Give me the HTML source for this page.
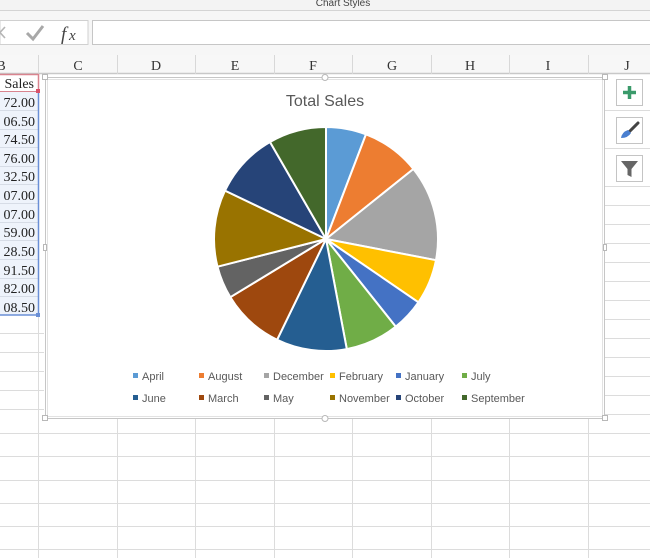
<!DOCTYPE html>
<html><head><meta charset="utf-8"><style>
html,body{margin:0;padding:0;width:650px;height:558px;overflow:hidden;background:#fff}
svg{display:block}
</style></head><body>
<svg width="650" height="558" viewBox="0 0 650 558" xmlns="http://www.w3.org/2000/svg">
<rect x="0" y="0" width="650" height="558" fill="#fff"/>
<rect x="0" y="0" width="650" height="10" fill="#f3f3f3"/>
<text x="343" y="6" font-family="Liberation Sans, sans-serif" font-size="10" fill="#444" text-anchor="middle">Chart Styles</text>
<line x1="0" y1="10.5" x2="650" y2="10.5" stroke="#d4d4d4"/>
<rect x="0" y="11" width="650" height="44" fill="#f6f6f6"/>
<rect x="0" y="20.5" width="88" height="24" fill="#fff" stroke="#d0d0d0"/>
<rect x="92.5" y="20.5" width="560" height="24" fill="#fff" stroke="#c6c6c6"/>
<path d="M5 27 L0 32.5 L5 38" fill="none" stroke="#b5b5b5" stroke-width="1.6"/>
<path d="M27 33 L33 39 L43 26" fill="none" stroke="#a8a8a8" stroke-width="3"/>
<text x="61" y="40" font-family="Liberation Serif, serif" font-style="italic" font-size="19" fill="#444">f</text>
<text x="69" y="40" font-family="Liberation Serif, serif" font-style="italic" font-size="15" fill="#444">x</text>
<rect x="0" y="55" width="650" height="19" fill="#f7f7f7"/>
<line x1="0" y1="73.5" x2="650" y2="73.5" stroke="#c8c8c8" stroke-width="1.5"/>
<g stroke="#d8d8d8">
<line x1="38.5" y1="55" x2="38.5" y2="74"/><line x1="117.5" y1="55" x2="117.5" y2="74"/><line x1="195.5" y1="55" x2="195.5" y2="74"/><line x1="274.5" y1="55" x2="274.5" y2="74"/><line x1="352.5" y1="55" x2="352.5" y2="74"/><line x1="431.5" y1="55" x2="431.5" y2="74"/><line x1="509.5" y1="55" x2="509.5" y2="74"/><line x1="588.5" y1="55" x2="588.5" y2="74"/>
</g>
<g font-family="Liberation Serif, serif" font-size="14" fill="#333" text-anchor="middle">
<text x="1" y="70">B</text><text x="78" y="70">C</text><text x="156" y="70">D</text><text x="235" y="70">E</text><text x="313" y="70">F</text><text x="392" y="70">G</text><text x="470" y="70">H</text><text x="548" y="70">I</text><text x="627" y="70">J</text>
</g>
<g stroke="#dcdcdc">
<line x1="38.5" y1="74" x2="38.5" y2="558"/><line x1="117.5" y1="419" x2="117.5" y2="558"/><line x1="195.5" y1="419" x2="195.5" y2="558"/><line x1="274.5" y1="419" x2="274.5" y2="558"/><line x1="352.5" y1="419" x2="352.5" y2="558"/><line x1="431.5" y1="419" x2="431.5" y2="558"/><line x1="509.5" y1="419" x2="509.5" y2="558"/><line x1="588.5" y1="419" x2="588.5" y2="558"/>
<line x1="0" y1="333.5" x2="44" y2="333.5"/><line x1="0" y1="352.5" x2="44" y2="352.5"/><line x1="0" y1="371.5" x2="44" y2="371.5"/><line x1="0" y1="390.5" x2="44" y2="390.5"/><line x1="0" y1="409.5" x2="44" y2="409.5"/>
<line x1="0" y1="433.5" x2="650" y2="433.5"/><line x1="0" y1="456.5" x2="650" y2="456.5"/><line x1="0" y1="480.5" x2="650" y2="480.5"/><line x1="0" y1="503.5" x2="650" y2="503.5"/><line x1="0" y1="526.5" x2="650" y2="526.5"/><line x1="0" y1="549.5" x2="650" y2="549.5"/>
<line x1="605" y1="110.5" x2="650" y2="110.5"/><line x1="605" y1="148.5" x2="650" y2="148.5"/><line x1="605" y1="186.5" x2="650" y2="186.5"/><line x1="605" y1="205.5" x2="650" y2="205.5"/><line x1="605" y1="224.5" x2="650" y2="224.5"/><line x1="605" y1="243.5" x2="650" y2="243.5"/><line x1="605" y1="262.5" x2="650" y2="262.5"/><line x1="605" y1="281.5" x2="650" y2="281.5"/><line x1="605" y1="300.5" x2="650" y2="300.5"/><line x1="605" y1="319.5" x2="650" y2="319.5"/><line x1="605" y1="338.5" x2="650" y2="338.5"/><line x1="605" y1="357.5" x2="650" y2="357.5"/><line x1="605" y1="376.5" x2="650" y2="376.5"/><line x1="605" y1="395.5" x2="650" y2="395.5"/><line x1="605" y1="414.5" x2="650" y2="414.5"/>
</g>
<rect x="0" y="92" width="38" height="223" fill="#eef3fb"/>
<g stroke="#d6dce6"><line x1="0" y1="110.5" x2="38" y2="110.5"/><line x1="0" y1="129.5" x2="38" y2="129.5"/><line x1="0" y1="147.5" x2="38" y2="147.5"/><line x1="0" y1="166.5" x2="38" y2="166.5"/><line x1="0" y1="184.5" x2="38" y2="184.5"/><line x1="0" y1="203.5" x2="38" y2="203.5"/><line x1="0" y1="222.5" x2="38" y2="222.5"/><line x1="0" y1="240.5" x2="38" y2="240.5"/><line x1="0" y1="259.5" x2="38" y2="259.5"/><line x1="0" y1="278.5" x2="38" y2="278.5"/><line x1="0" y1="296.5" x2="38" y2="296.5"/></g>
<path d="M0 74.5 H38.5 V92" fill="none" stroke="#d9848f" stroke-width="1.5"/>
<line x1="0" y1="91.5" x2="38" y2="91.5" stroke="#d9848f"/>
<rect x="36" y="89" width="4" height="4" fill="#d9536a"/>
<path d="M38.5 93 V315 H0" fill="none" stroke="#6a8fd6" stroke-width="1.5"/>
<rect x="36" y="313" width="4" height="4" fill="#6a8fd6"/>
<g font-family="Liberation Serif, serif" font-size="14" fill="#222" text-anchor="end">
<text x="34" y="88">Sales</text>
<text x="35" y="107">72.00</text><text x="35" y="126">06.50</text><text x="35" y="144">74.50</text><text x="35" y="163">76.00</text><text x="35" y="181">32.50</text><text x="35" y="200">07.00</text><text x="35" y="219">07.00</text><text x="35" y="237">59.00</text><text x="35" y="256">28.50</text><text x="35" y="275">91.50</text><text x="35" y="293">82.00</text><text x="35" y="312">08.50</text>
</g>
<rect x="45.5" y="77.5" width="559" height="341" fill="#fff" stroke="#c6c6c6"/>
<rect x="47.5" y="79.5" width="555" height="337" fill="none" stroke="#e2e2e2"/>
<g fill="#fff" stroke="#b8b8b8">
<rect x="42.5" y="74.5" width="5" height="5"/><rect x="602.5" y="74.5" width="5" height="5"/><rect x="42.5" y="415.5" width="5" height="5"/><rect x="602.5" y="415.5" width="5" height="5"/>
<circle cx="325" cy="77.5" r="3"/><circle cx="325" cy="418.5" r="3"/><rect x="43.5" y="244.5" width="3" height="6"/><rect x="603.5" y="244.5" width="3" height="6"/>
</g>
<text x="325" y="106" font-family="Liberation Sans, sans-serif" font-size="16" fill="#595959" text-anchor="middle">Total Sales</text>
<g stroke="#fff" stroke-width="2" stroke-linejoin="round">
<path d="M326 239 L326 127 A112 112 0 0 1 365.95 134.37Z" fill="#5b9bd5"/>
<path d="M326 239 L365.95 134.37 A112 112 0 0 1 413.4 168.98Z" fill="#ed7d31"/>
<path d="M326 239 L413.4 168.98 A112 112 0 0 1 435.98 260.18Z" fill="#a5a5a5"/>
<path d="M326 239 L435.98 260.18 A112 112 0 0 1 418.41 302.28Z" fill="#ffc000"/>
<path d="M326 239 L418.41 302.28 A112 112 0 0 1 395.72 326.65Z" fill="#4472c4"/>
<path d="M326 239 L395.72 326.65 A112 112 0 0 1 346.8 349.05Z" fill="#70ad47"/>
<path d="M326 239 L346.8 349.05 A112 112 0 0 1 277.08 339.76Z" fill="#255e91"/>
<path d="M326 239 L277.08 339.76 A112 112 0 0 1 230.3 297.18Z" fill="#9e480e"/>
<path d="M326 239 L230.3 297.18 A112 112 0 0 1 217.47 266.66Z" fill="#636363"/>
<path d="M326 239 L217.47 266.66 A112 112 0 0 1 225 190.6Z" fill="#997300"/>
<path d="M326 239 L225 190.6 A112 112 0 0 1 270 142Z" fill="#264478"/>
<path d="M326 239 L270 142 A112 112 0 0 1 326 127Z" fill="#43682b"/>
</g>
<g font-family="Liberation Sans, sans-serif" font-size="11" fill="#595959">
<rect x="133" y="373" width="5" height="5" fill="#5b9bd5"/><text x="142" y="380">April</text>
<rect x="199" y="373" width="5" height="5" fill="#ed7d31"/><text x="208" y="380">August</text>
<rect x="264" y="373" width="5" height="5" fill="#a5a5a5"/><text x="273" y="380">December</text>
<rect x="330" y="373" width="5" height="5" fill="#ffc000"/><text x="339" y="380">February</text>
<rect x="396" y="373" width="5" height="5" fill="#4472c4"/><text x="405" y="380">January</text>
<rect x="462" y="373" width="5" height="5" fill="#70ad47"/><text x="471" y="380">July</text>
<rect x="133" y="395" width="5" height="5" fill="#255e91"/><text x="142" y="402">June</text>
<rect x="199" y="395" width="5" height="5" fill="#9e480e"/><text x="208" y="402">March</text>
<rect x="264" y="395" width="5" height="5" fill="#636363"/><text x="273" y="402">May</text>
<rect x="330" y="395" width="5" height="5" fill="#997300"/><text x="339" y="402">November</text>
<rect x="396" y="395" width="5" height="5" fill="#264478"/><text x="405" y="402">October</text>
<rect x="462" y="395" width="5" height="5" fill="#43682b"/><text x="471" y="402">September</text>
</g>
<g fill="#fff" stroke="#c4c4c4">
<rect x="616.5" y="79.5" width="26" height="26"/><rect x="616.5" y="117.5" width="26" height="26"/><rect x="616.5" y="155.5" width="26" height="26"/>
</g>
<path d="M629.5 86 V99 M623 92.5 H636" stroke="#3a9a6a" stroke-width="3.5"/>
<path d="M638 123 L629 132" stroke="#444" stroke-width="3" stroke-linecap="round"/>
<path d="M628 130 Q622 132 621 138 Q628 138 631 133 Z" fill="#4a7fd0"/>
<path d="M621 161 H638 L631.5 169 V177 L627.5 175 V169 Z" fill="#666"/>
</svg>
</body></html>
